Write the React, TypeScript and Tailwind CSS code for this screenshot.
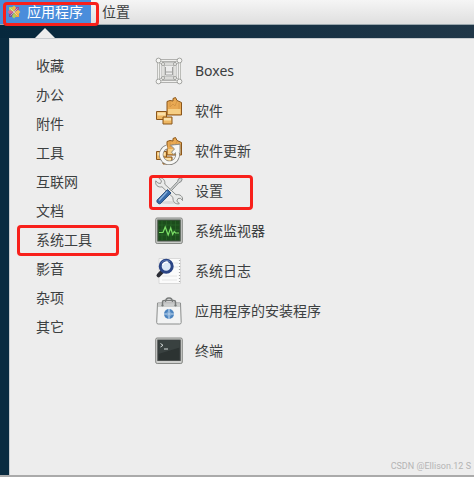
import { useState } from 'react';
import type { ReactNode } from 'react';

const categories = ['收藏', '办公', '附件', '工具', '互联网', '文档', '系统工具', '影音', '杂项', '其它'];

function LogoIcon() {
	return (
		<svg viewBox="0 0 14 14" className="h-3.5 w-3.5 shrink-0" aria-hidden="true">
			<path d="M2 2h4.8v4.8H2z" fill="#b4d15a" />
			<path d="M7.2 2H12v4.8H7.2z" fill="#9a4d9c" />
			<path d="M2 7.2h4.8V12H2z" fill="#7a4f9f" />
			<path d="M7.2 7.2H12V12H7.2z" fill="#efa63c" />
			<path d="M7 0.6 9.2 2.8 7 6.4 4.8 2.8Z" fill="#e9b84a" />
			<path d="M0.6 7 2.8 4.8 6.4 7 2.8 9.2Z" fill="#e0628c" />
			<path d="M13.4 7 11.2 4.8 7.6 7 11.2 9.2Z" fill="#f0c05a" />
			<path d="M7 13.4 4.8 11.2 7 7.6 9.2 11.2Z" fill="#a8cf60" />
			<path d="M3.5 3.5l7 7M10.5 3.5l-7 7" stroke="#f4eadc" strokeWidth="0.6" />
		</svg>
	);
}

function IconFrame({ children }: { children: ReactNode }) {
	return (
		<svg viewBox="0 0 28 28" className="h-7 w-7 shrink-0" aria-hidden="true">
			{children}
		</svg>
	);
}

function BoxesIcon() {
	return (
		<IconFrame>
			<g fill="none" stroke="#9c9d9a" strokeWidth="2.8">
				<path d="M3.5 3.5h21v21h-21z" />
				<path d="M8 7h12v14H8z" />
				<path d="M3.5 3.5 8 7M24.5 3.5 20 7M3.5 24.5 8 21M24.5 24.5 20 21" />
			</g>
			<g fill="none" stroke="#f0f0ee" strokeWidth="1.6">
				<path d="M3.5 3.5h21v21h-21z" />
				<path d="M8 7h12v14H8z" />
				<path d="M3.5 3.5 8 7M24.5 3.5 20 7M3.5 24.5 8 21M24.5 24.5 20 21" />
			</g>
			<path d="M10.5 10v8h7v-8M11 15h6" fill="none" stroke="#a0a19f" strokeWidth="1" />
			<g fill="#f5f5f3" stroke="#8f908d" strokeWidth="0.8">
				<circle cx="3.5" cy="3.5" r="2.4" />
				<circle cx="24.5" cy="3.5" r="2.4" />
				<circle cx="3.5" cy="24.5" r="2.4" />
				<circle cx="24.5" cy="24.5" r="2.4" />
				<circle cx="8" cy="7" r="1.5" />
				<circle cx="20" cy="7" r="1.5" />
				<circle cx="8" cy="21" r="1.5" />
				<circle cx="20" cy="21" r="1.5" />
			</g>
		</IconFrame>
	);
}

function Packages() {
	return (
		<g strokeLinejoin="round">
			<path d="M12 4.5 15 3.5 18 4V1.5l2.5-1 1.5 3 4.5 2V18H12z" fill="#e9a953" stroke="#8a561b" strokeWidth="1" />
			<path d="M13 12h12.5v5H13z" fill="#f6cf85" />
			<path d="M15 4v6l3-3 2 2 2-5M24 6v6" fill="none" stroke="#cf9243" strokeWidth="0.8" />
			<path d="M1.5 14.5h10v8h-10z" fill="#eeb763" stroke="#8a561b" strokeWidth="1" />
			<path d="M2.5 15.5h8v3h-8z" fill="#fae0a9" />
			<path d="M8 20h9v7H8z" fill="#eeb763" stroke="#8a561b" strokeWidth="1" />
			<path d="M9 21h7v2.5H9z" fill="#fae0a9" />
		</g>
	);
}

function SoftwareIcon() {
	return (
		<IconFrame>
			<Packages />
		</IconFrame>
	);
}

function UpdateIcon() {
	return (
		<IconFrame>
			<Packages />
			<path d="M12 9.8A8.2 8.2 0 1 0 21.5 13.5" fill="none" stroke="#80807e" strokeWidth="4.4" />
			<path d="M15.5 8.2 25 7.2V17l-3-2.8-3.2 3.3-2.3-2.3 3-3.3z" fill="#f7f7f5" stroke="#80807e" strokeWidth="0.9" />
			<path d="M12 9.8A8.2 8.2 0 1 0 21.5 13.5" fill="none" stroke="#f7f7f5" strokeWidth="3" />
		</IconFrame>
	);
}

function SettingsIcon() {
	return (
		<IconFrame>
			<ellipse cx="14" cy="25.5" rx="11" ry="1.5" fill="#d9d9d9" />
			<path
				d="M3.8 0.8 6.5 4 5.5 6.5 2.8 6 0.8 3.8C-0.2 8 3 10.8 7 9.8L18 20.5C17.5 25 20.5 27.5 24.3 26.8L21.8 24 23 21.5 25.5 21.3 27.5 23.5C28.3 19.5 25 16.8 21 17.8L9.8 7.2C10.5 3 7.5 0.2 3.8 0.8Z"
				fill="#e9eae9"
				stroke="#858785"
				strokeWidth="0.9"
			/>
			<path d="M15 12.5 22.5 4.5 23.5 1.8 26.2 0.8 27.2 2 26.2 4.5 23.8 5.8 16.3 13.8Z" fill="#d2d4d4" stroke="#737879" strokeWidth="0.8" />
			<path d="M12.5 12.5 16 16 5.8 26.3C4 28 0.8 25 2.2 23Z" fill="#386ba9" stroke="#214877" strokeWidth="0.9" />
			<path d="M12.2 14.5 4 23.5" stroke="#8db4df" strokeWidth="1.3" />
		</IconFrame>
	);
}

function MonitorIcon() {
	return (
		<IconFrame>
			<rect x="0.7" y="1" width="26.6" height="25.5" rx="1.5" fill="#c9cbc8" stroke="#858884" />
			<rect x="2.8" y="3" width="22.4" height="21" fill="#1c4d1c" stroke="#4b554a" />
			<path d="M7 3.5v20M11.5 3.5v20M16 3.5v20M20.5 3.5v20M3.3 8h21.4M3.3 13h21.4M3.3 18h21.4" stroke="#2e702c" strokeWidth="0.5" />
			<path d="M4 15.5h4l2.2-5.5 3 8 2.5-7 2 6.5 1.5-3 1.3 1.5h3.5" fill="none" stroke="#7cdf67" strokeWidth="1.2" />
		</IconFrame>
	);
}

function LogIcon() {
	return (
		<IconFrame>
			<path d="M4 1.5h21.5v25H4z" fill="#fbfbfb" stroke="#d3d3d3" strokeWidth="0.8" />
			<path d="M18 6h5M18 10h5M7 19h15M7 23h15" stroke="#e2e2e2" strokeWidth="0.8" />
			<path d="M24.5 3v22" stroke="#a9a9a9" strokeWidth="1.2" strokeDasharray="1 2" />
			<path d="M7.2 14.5 3.5 18.3" stroke="#2a2c35" strokeWidth="4" strokeLinecap="round" />
			<circle cx="11.2" cy="9.3" r="6" fill="#dce8f6" stroke="#2b4585" strokeWidth="3" />
			<path d="M7.5 8A4.5 4.5 0 0 1 13 5.3" fill="none" stroke="#fff" strokeWidth="1.5" />
			<path d="M6.3 5.8A6 6 0 0 1 15 4.8" fill="none" stroke="#6683bd" strokeWidth="0.8" />
		</IconFrame>
	);
}

function InstallerIcon() {
	return (
		<IconFrame>
			<path d="M2.5 6h23l0.7 19.5q0 1.5-1.5 1.5H3.2q-1.5 0-1.5-1.5z" fill="#f2f3f3" stroke="#8b8d8c" />
			<path d="M3 6.5h22v3.5H3z" fill="#cbcdcc" />
			<path d="M7.5 9V5q0-1.5 2-1.5h9q2 0 2 1.5v4M10.5 5q0-4 3.5-4t3.5 4" fill="none" stroke="#777a79" strokeWidth="1.4" />
			<circle cx="7.5" cy="8.5" r="1.1" fill="#757877" />
			<circle cx="20.5" cy="8.5" r="1.1" fill="#757877" />
			<circle cx="14" cy="17" r="5" fill="#4c84bf" />
			<path d="M14 12v10M9 17h10" stroke="#c5daee" strokeWidth="1.2" />
			<circle cx="14" cy="17" r="2.3" fill="none" stroke="#91b6dc" strokeWidth="0.8" />
		</IconFrame>
	);
}

function TerminalIcon() {
	return (
		<IconFrame>
			<rect x="0.7" y="1" width="26.6" height="25.5" rx="1.5" fill="#cfd0ce" stroke="#858784" />
			<rect x="2.8" y="3" width="22.4" height="20.5" fill="#2c3332" stroke="#4b4f4e" />
			<path d="M3.3 3.5h21.4v7L3.3 17z" fill="#394140" />
			<path d="M5.5 6.5 8 8.3 5.5 10M9 12h4" fill="none" stroke="#d9dedc" strokeWidth="1" />
		</IconFrame>
	);
}

const apps = [
	{ name: 'Boxes', icon: <BoxesIcon /> },
	{ name: '软件', icon: <SoftwareIcon /> },
	{ name: '软件更新', icon: <UpdateIcon /> },
	{ name: '设置', icon: <SettingsIcon />, marked: true },
	{ name: '系统监视器', icon: <MonitorIcon /> },
	{ name: '系统日志', icon: <LogIcon /> },
	{ name: '应用程序的安装程序', icon: <InstallerIcon /> },
	{ name: '终端', icon: <TerminalIcon /> },
];

export default function App() {
	const [selected, setSelected] = useState('系统工具');

	return (
		<div className="flex min-h-screen flex-col border-b-2 border-[#aaaaaa] bg-[#092b40] font-['Noto_Sans','Noto_Sans_CJK_SC',sans-serif] text-sm text-[#3c4041]">
			{/* Top bar */}
			<header className="flex h-[25px] items-stretch border-b border-[#9aa7ad] bg-linear-to-b from-[#f5f5f5] to-[#dfdfdf] leading-6">
				<button className="relative flex w-[91px] items-center gap-1.5 bg-[#4a8ddb] pl-[7px] whitespace-nowrap text-white">
					<LogoIcon />
					应用程序
					<span className="pointer-events-none absolute top-0.5 -right-2 -bottom-0.5 left-[3px] rounded-sm border-3 border-[#f8201b]" />
				</button>
				<button className="pl-[11px]">位置</button>
			</header>

			{/* Applications menu */}
			<div className="h-[13px] bg-linear-to-r from-[#06283d] to-[#203748]">
				<svg viewBox="0 0 22 11" className="mt-[3px] ml-[34px] h-[11px] w-[22px]" aria-hidden="true">
					<path d="M0 11 11 0 22 11Z" fill="#ededed" />
				</svg>
			</div>
			<main className="relative ml-[9px] flex flex-1 border-t border-l border-[#c7cbce] bg-[#ededed]">
				<nav className="flex w-[137px] shrink-0 flex-col pt-3">
					{categories.map((category) => (
						<button
							key={category}
							onClick={() => setSelected(category)}
							className="relative h-[29px] pl-[26px] text-left"
						>
							{category}
							{selected === category && (
								<span className="pointer-events-none absolute top-0 right-7 -bottom-0.5 left-[7px] rounded-sm border-3 border-[#f8201b]" />
							)}
						</button>
					))}
				</nav>
				<ul className="flex-1 pt-3">
					{apps.map((app) => (
						<li key={app.name}>
							<button className="relative flex h-10 items-center gap-3 pr-8 pl-2 text-left">
								{app.icon}
								{app.name}
								{app.marked && (
									<span className="pointer-events-none absolute top-1 bottom-px left-0.5 w-[104px] rounded-sm border-3 border-[#f8201b]" />
								)}
							</button>
						</li>
					))}
				</ul>
				<p className="absolute right-[3px] bottom-0.5 font-[Roboto,sans-serif] text-[9px] text-[#b4b4b4]">
					CSDN @Ellison.12 S
				</p>
			</main>
		</div>
	);
}
